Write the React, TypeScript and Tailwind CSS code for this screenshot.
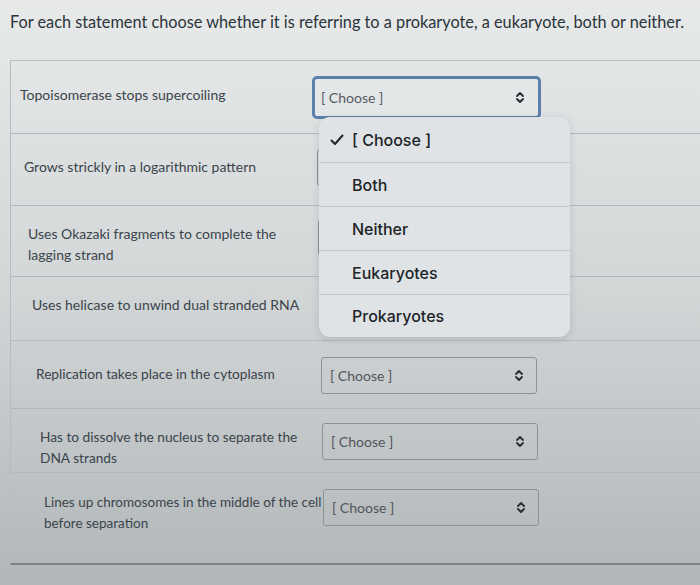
import React from 'react';

const OPTIONS = ['Both', 'Neither', 'Eukaryotes', 'Prokaryotes'];

// rows drift to the right a little, as in the photo
const ROWS = [
  { text: 'Topoisomerase stops supercoiling', row: 'h-[73px] pl-[9px] pt-[15px]', label: 'w-[292px] pr-[12px] mt-[8px] text-[14px]', focused: true },
  { text: 'Grows strickly in a logarithmic pattern', row: 'h-[72px] pl-[13px] pt-[15px]', label: 'w-[293px] pr-[12px] mt-[7px] text-[14px]', covered: true },
  { text: 'Uses Okazaki fragments to complete the lagging strand', row: 'h-[71px] pl-[17px] pt-[13px]', label: 'w-[290px] pr-[12px] mt-[4px] text-[14px]', covered: true },
  { text: 'Uses helicase to unwind dual stranded RNA', row: 'h-[64px] pl-[21px] pt-[14px]', label: 'w-[288px] pr-[12px] mt-[3px] text-[14px]', covered: true },
  { text: 'Replication takes place in the cytoplasm', row: 'h-[68px] pl-[25px] pt-[16px]', label: 'w-[285px] pr-[12px] mt-[6px] text-[13.7px]' },
  { text: 'Has to dissolve the nucleus to separate the DNA strands', row: 'h-[64px] pl-[29px] pt-[14px]', label: 'w-[282px] pr-[12px] mt-[3px] text-[13.7px]' },
  { text: 'Lines up chromosomes in the middle of the cell before separation', row: 'h-[90px] pl-[33px] pt-[16px]', label: 'w-[291px] -mr-[12px] pr-0 mt-[3px] text-[13.5px]' },
];

function UpDown() {
  return (
    <svg width="10" height="13" viewBox="0 0 10 13" fill="none">
      <path d="M2 5 L5 2 L8 5 M2 8 L5 11 L8 8" stroke="#2a3035" strokeWidth="1.9" strokeLinecap="round" strokeLinejoin="round" />
    </svg>
  );
}

function Select({ focused, covered }: { focused?: boolean; covered?: boolean }) {
  if (focused) {
    return (
      <div className="shrink-0 flex items-center justify-between w-[229px] h-[43px] rounded-[5px] border-[3px] border-[#5b80ab] pl-[6px] pr-[13px] bg-[#e4e7e7]">
        <span className="text-[14px] text-[#555b60]">[ Choose ]</span>
        <UpDown />
      </div>
    );
  }
  return (
    <div className="shrink-0 flex items-center justify-between w-[216px] h-[37px] rounded-[3px] border border-[#8d9395] pl-[8px] pr-[12px]">
      {/* the open picker hides these */}
      {!covered && (
        <>
          <span className="text-[14px] text-[#50565a]">[ Choose ]</span>
          <UpDown />
        </>
      )}
    </div>
  );
}

export default function App() {
  return (
    <div className="relative w-[700px] h-[585px] overflow-hidden bg-gradient-to-b from-[#e8eaea] via-[#d2d6d7] to-[#b1b6b8] font-['Lato',sans-serif] text-[#2f3a42]">
      <h1 className="pt-[12px] pl-[10px] text-[16.3px] leading-[20px] text-[#2a343b]">
        For each statement choose whether it is referring to a prokaryote, a eukaryote, both or neither.
      </h1>

      <div className="mt-[28px] ml-[10px] border-t border-l border-[#b7bcbe] border-b-2 border-b-[#7f8588]">
        {ROWS.map((r, i) => (
          <div key={i} className={`flex items-start ${r.row} ${i < ROWS.length - 1 ? 'border-b border-[#b3b8ba]' : ''}`}>
            <p className={`${r.label} shrink-0 leading-[21px] text-[#3a444b]`}>{r.text}</p>
            <Select focused={r.focused} covered={r.covered} />
          </div>
        ))}
      </div>

      {/* native picker popup */}
      <div className="absolute left-[319px] top-[117px] w-[251px] rounded-[11px] bg-[#dfe3e5] shadow-[0_2px_10px_rgba(0,0,0,0.12)] font-['Inter',sans-serif] text-[16px] font-medium text-[#202427] overflow-hidden">
        <div className="flex items-center h-[46px] pl-[11px] border-b border-[#c5c9cb]">
          <svg width="14" height="12" viewBox="0 0 14 12" fill="none" className="mr-[8px]">
            <path d="M1.5 6.5 L5 10 L12.5 1.5" stroke="#202427" strokeWidth="2" strokeLinecap="round" strokeLinejoin="round" />
          </svg>
          <span>[ Choose ]</span>
        </div>
        {OPTIONS.map((o, i) => (
          <div key={o} className={`flex items-center pl-[33px] ${i < OPTIONS.length - 1 ? 'h-[44px] border-b border-[#c5c9cb]' : 'h-[42px]'}`}>
            {o}
          </div>
        ))}
      </div>
    </div>
  );
}
